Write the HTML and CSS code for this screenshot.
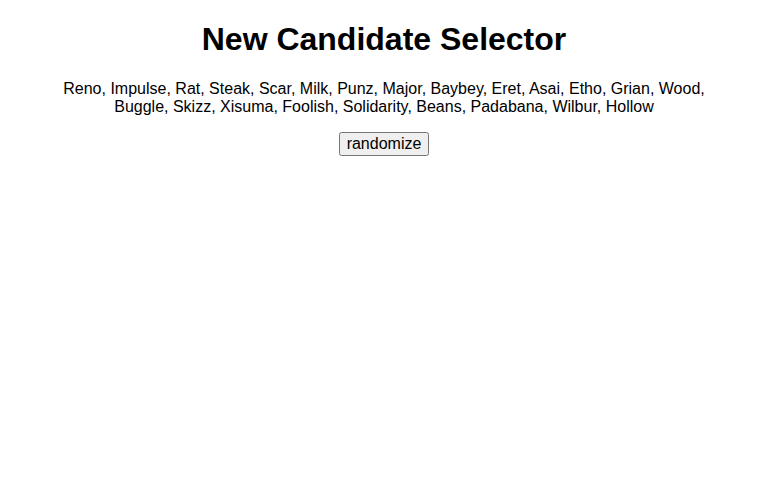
FILE: index.html
```html
<!DOCTYPE html>
<html lang="en">
<head>
    <meta charset="UTF-8">
    <meta name="viewport" content="width=device-width, initial-scale=1.0">
    <title>New Candidate Selector</title>
    <link rel="stylesheet" href="styles.css">
</head>
<body>
    <h1>New Candidate Selector</h1>
    <p id="names">Reno, Impulse, Rat, Steak, Scar, Milk, Punz, Major, Baybey, Eret, Asai, Etho, Grian, Wood, Buggle, Skizz, Xisuma, Foolish, Solidarity, Beans, Padabana, Wilbur, Hollow</p>
    <button id="randomize">randomize</button>
</body>
</html>
```

FILE: styles.css
```css
body {
    font-family: "Liberation Sans", Arial, sans-serif;
    text-align: center;
    margin: 0;
}
h1 {
    font-size: 32px;
}
#names {
    max-width: 660px;
    margin-left: auto;
    margin-right: auto;
}
button {
    font-family: "Liberation Sans", Arial, sans-serif;
    font-size: 16px;
}
```
